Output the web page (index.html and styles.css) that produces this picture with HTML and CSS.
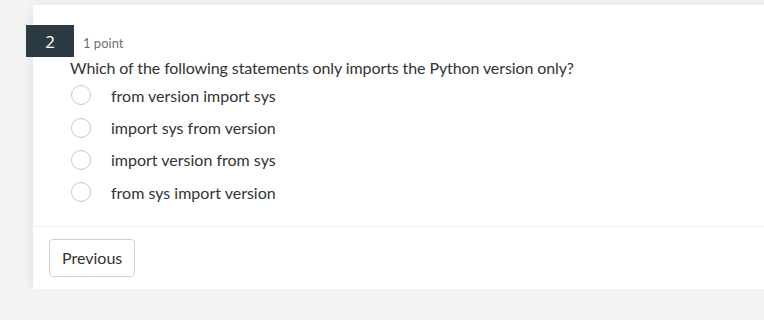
FILE: index.html
```html
<!DOCTYPE html>
<html lang="en">
<head>
  <meta charset="UTF-8" />
  <title>Quiz question</title>
  <link rel="stylesheet" href="styles.css">
</head>
<body>
  <div class="page">
    <div class="card">
      <div class="question">
        <div class="q-head">
          <span class="q-num">2</span>
          <span class="q-points">1 point</span>
        </div>
        <p class="q-text">Which of the following statements only imports the Python version only?</p>
        <ul class="options">
          <li class="option"><span class="radio"></span><span>from version import sys</span></li>
          <li class="option"><span class="radio"></span><span>import sys from version</span></li>
          <li class="option"><span class="radio"></span><span>import version from sys</span></li>
          <li class="option"><span class="radio"></span><span>from sys import version</span></li>
        </ul>
      </div>
      <div class="card-footer">
        <button class="btn">Previous</button>
      </div>
    </div>
  </div>
</body>
</html>
```

FILE: styles.css
```css
body {
  margin: 0;
  background: #f3f3f3;
  font-family: Lato, "Open Sans", sans-serif;
  color: #333;
  overflow: hidden;
}

.page {
  padding: 5px 0 0 33px;
}

.card {
  background: #fff;
  box-shadow: 0 2px 10px rgba(0, 0, 0, 0.09);
  min-width: 760px;
}

.question {
  padding: 20px 0 17px;
}

.q-head {
  display: flex;
  align-items: center;
  margin-left: -7px;
}

.q-num {
  width: 48px;
  height: 32px;
  background: #2c3a43;
  color: #fff;
  font-family: "Open Sans", sans-serif;
  font-size: 17px;
  display: flex;
  align-items: center;
  justify-content: center;
}

.q-points {
  margin-left: 9px;
  font-size: 13px;
  color: #6e6e6e;
  padding-top: 3px;
}

.q-text {
  margin: 1px 0 1px 37px;
  font-size: 16px;
  letter-spacing: -0.1px;
  line-height: 20px;
}

.options {
  list-style: none;
  margin: 0 0 0 38px;
  padding: 0;
}

.option {
  display: flex;
  align-items: center;
  gap: 20px;
  height: 32.4px;
  font-size: 16px;
}

.radio {
  width: 18px;
  height: 18px;
  border: 1px solid #c8c8c8;
  border-radius: 50%;
  flex: none;
}

.card-footer {
  border-top: 1px solid #eeeeee;
  padding: 12px 16px 12px;
}

.btn {
  display: block;
  font-family: Lato, sans-serif;
  font-size: 16px;
  color: #333;
  background: #fff;
  border: 1px solid #d0d0d0;
  border-radius: 4px;
  height: 38px;
  padding: 0 12px;
}
```
